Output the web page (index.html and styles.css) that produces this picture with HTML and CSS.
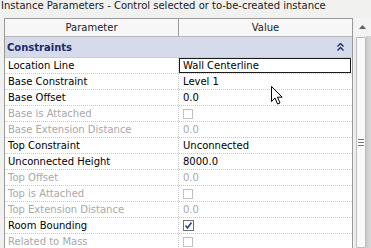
FILE: index.html
```html
<!DOCTYPE html>
<html>
<head>
<meta charset="utf-8">
<link rel="stylesheet" href="styles.css">
</head>
<body>
<div class="title">Instance Parameters - Control selected or to-be-created instance</div>
<div class="panel">
  <div class="grid">
    <div class="head">
      <div class="hcell pcol">Parameter</div>
      <div class="hcell vcol">Value</div>
    </div>
    <div class="group">
      <span>Constraints</span>
      <svg class="collapse" width="7" height="8" viewBox="0 0 7 8"><path d="M0.5 3.5 L3.5 0.5 L6.5 3.5 M0.5 7.5 L3.5 4.5 L6.5 7.5" fill="none" stroke="#1c2a6b" stroke-width="1.4"/></svg>
    </div>
    <div class="row"><div class="p">Location Line</div><div class="v"><div class="edit">Wall Centerline</div></div></div>
    <div class="row"><div class="p">Base Constraint</div><div class="v">Level 1</div></div>
    <div class="row"><div class="p">Base Offset</div><div class="v">0.0</div></div>
    <div class="row dis"><div class="p">Base is Attached</div><div class="v"><span class="cb"></span></div></div>
    <div class="row dis"><div class="p">Base Extension Distance</div><div class="v">0.0</div></div>
    <div class="row"><div class="p">Top Constraint</div><div class="v">Unconnected</div></div>
    <div class="row"><div class="p">Unconnected Height</div><div class="v">8000.0</div></div>
    <div class="row dis"><div class="p">Top Offset</div><div class="v">0.0</div></div>
    <div class="row dis"><div class="p">Top is Attached</div><div class="v"><span class="cb"></span></div></div>
    <div class="row dis"><div class="p">Top Extension Distance</div><div class="v">0.0</div></div>
    <div class="row"><div class="p">Room Bounding</div><div class="v"><span class="cb on"><svg width="9" height="9" viewBox="0 0 9 9"><path d="M1.5 4.5 L3.5 7 L7.5 1.5" fill="none" stroke="#2b3f8c" stroke-width="1.6"/></svg></span></div></div>
    <div class="row dis"><div class="p">Related to Mass</div><div class="v"><span class="cb"></span></div></div>
  </div>
  <div class="scroll">
    <div class="sbtn"><svg width="7" height="4" viewBox="0 0 7 4"><path d="M0 4 L3.5 0 L7 4 Z" fill="#606060"/></svg></div>
    <div class="track">
      <div class="thumb"><div class="grip"></div></div>
    </div>
  </div>
</div>
<svg class="cursor" width="12" height="19" viewBox="0 0 12 19"><path d="M0.5 0.5 L0.5 15.5 L4 12 L6.5 18 L9 17 L6.5 11.2 L11.2 11.2 Z" fill="#fff" stroke="#000" stroke-width="1"/></svg>
</body>
</html>
```
FILE: styles.css
```css
html, body {
  margin: 0;
  padding: 0;
}
body {
  width: 371px;
  height: 248px;
  overflow: hidden;
  background: #f1f1ef;
  font-family: "DejaVu Sans", "Liberation Sans", sans-serif;
  font-size: 10px;
  color: #000;
  position: relative;
}
.title {
  height: 18px;
  line-height: 12px;
  padding-left: 1px;
  font-size: 10px;
  color: #1a1a1a;
}
.panel {
  display: flex;
  padding-left: 4px;
}
.grid {
  width: 347px;
  height: 240px;
  border: 1px solid #9a9a9a;
  border-bottom: none;
  background: #fff;
  overflow: hidden;
}
.head {
  display: flex;
  height: 17px;
  background: #f7f7f7;
  border-bottom: 1px solid #b8b8b8;
}
.hcell {
  text-align: center;
  line-height: 17px;
  color: #222;
}
.pcol {
  width: 173px;
  border-right: 1px solid #9a9a9a;
}
.vcol {
  flex: 1;
}
.group {
  height: 20px;
  background: #d5dbea;
  display: flex;
  align-items: center;
  justify-content: space-between;
  padding: 0 8px 0 2px;
  font-weight: bold;
  color: #1c2a6b;
  border-bottom: 1px solid #c8ccd6;
}
.collapse {
  margin-top: -1px;
}
.row {
  display: flex;
  height: 15px;
  border-bottom: 1px dotted #c9c9c9;
}
.p {
  width: 170px;
  padding-left: 3px;
  line-height: 15px;
  border-right: 1px dotted #c9c9c9;
  white-space: nowrap;
}
.v {
  flex: 1;
  padding-left: 4px;
  line-height: 15px;
  display: flex;
  align-items: center;
  position: relative;
}
.dis .p, .dis .v {
  color: #a8a8a8;
}
.edit {
  position: absolute;
  left: 0;
  top: 0;
  right: 1px;
  height: 15px;
  border: 1px solid #1a1a1a;
  padding-left: 3px;
  line-height: 15px;
  background: #fff;
  color: #000;
  box-sizing: border-box;
  line-height: 13px;
}
.cb {
  width: 10px;
  height: 10px;
  border: 1px solid #c0c0c0;
  background: #fff;
  box-sizing: border-box;
  display: flex;
  align-items: center;
  justify-content: center;
}
.cb.on {
  border-color: #707070;
  width: 11px;
  height: 11px;
}
.scroll {
  width: 17px;
  margin-left: 1px;
  height: 230px;
  display: flex;
  flex-direction: column;
}
.sbtn {
  height: 18px;
  display: flex;
  align-items: center;
  justify-content: center;
  background: #f4f4f4;
}
.track {
  flex: 1;
  background: linear-gradient(to right, #ececec 0, #ececec 12px, #c8c8c8 12px, #dadada 100%);
  padding: 1px 5px 0 2px;
  display: flex;
}
.thumb {
  flex: 1;
  background: #f9f9f9;
  border: 1px solid #bdbdbd;
  border-radius: 1px;
  display: flex;
  align-items: center;
  justify-content: center;
}
.grip {
  width: 6px;
  height: 5px;
  border-top: 1px solid #777;
  border-bottom: 1px solid #777;
  background: linear-gradient(#fff 0, #fff 2px, #777 2px, #777 3px, #fff 3px);
}
.cursor {
  position: absolute;
  left: 271px;
  top: 86px;
}
```
